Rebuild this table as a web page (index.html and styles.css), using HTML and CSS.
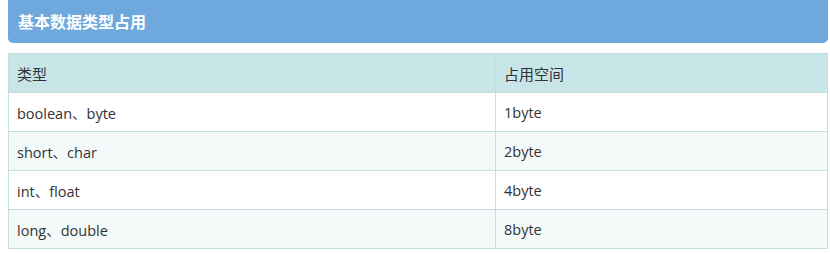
FILE: index.html
```html
<!DOCTYPE html>
<html lang="zh">
<head>
<meta charset="utf-8">
<link rel="stylesheet" href="styles.css">
</head>
<body>
<div class="title">基本数据类型占用</div>
<table class="tbl">
  <thead>
    <tr><th>类型</th><th>占用空间</th></tr>
  </thead>
  <tbody>
    <tr><td>boolean、byte</td><td>1byte</td></tr>
    <tr><td>short、char</td><td>2byte</td></tr>
    <tr><td>int、float</td><td>4byte</td></tr>
    <tr><td>long、double</td><td>8byte</td></tr>
  </tbody>
</table>
</body>
</html>
```
FILE: styles.css
```css
body {
  margin: 0 2px 0 8px;
  font-family: "Open Sans", "Noto Sans CJK SC", sans-serif;
  color: #333;
  background: #fff;
}
.title {
  background: #6fa8dc;
  color: #fff;
  font-weight: bold;
  font-size: 16px;
  height: 43px;
  line-height: 43px;
  padding-left: 10px;
  border-radius: 0 0 5px 5px;
  font-family: "Noto Sans CJK SC", sans-serif;
}
.tbl {
  margin-top: 10px;
  width: 100%;
  border-collapse: collapse;
  font-size: 14.5px;
}
.tbl th, .tbl td {
  border: 1px solid #c5dfe0;
  height: 38px;
  padding: 0 8px;
  text-align: left;
  font-weight: normal;
  vertical-align: middle;
}
.tbl th:first-child, .tbl td:first-child { width: 470px; }
.tbl thead tr { background: #c8e6e8; }
.tbl tbody tr:nth-child(even) { background: #f4fafa; }
.tbl th { font-family: "Noto Sans CJK SC", sans-serif; font-size: 15px; }
```
